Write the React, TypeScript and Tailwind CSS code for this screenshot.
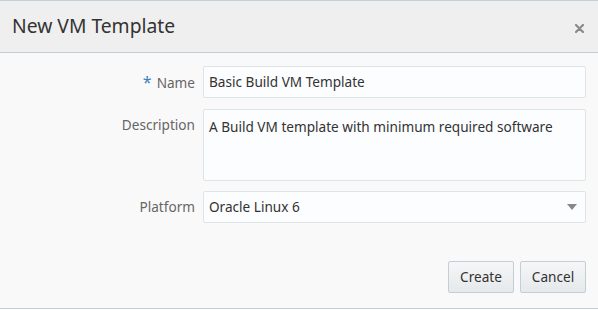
const font = { fontFamily: '"Noto Sans", "Open Sans", sans-serif' };

function Field({ label, required, children }: { label: string; required?: boolean; children: React.ReactNode }) {
  return (
    <div className="flex items-start">
      <div className="w-[195px] shrink-0 text-right text-[13.6px] leading-[32px] text-[#666]">
        {required && <span className="mr-[5px] text-[16px] text-[#3c7dc4]">*</span>}
        {label}
      </div>
      <div className="ml-[8px] w-[383px]">{children}</div>
    </div>
  );
}

export default function App() {
  return (
    <div className="flex h-[310px] w-[598px] flex-col bg-white" style={font}>
      <div className="flex h-[53px] shrink-0 items-center justify-between border-t border-b border-[#c4ced7] bg-[#efefef] pl-[12px] pr-[14px]">
        <h1 className="text-[19.3px] font-normal text-[#333]">New VM Template</h1>
        <svg width="9" height="9" viewBox="0 0 9 9" className="mt-[4px]">
          <path d="M1 1L8 8M8 1L1 8" stroke="#8a8a8a" strokeWidth="2.2" strokeLinecap="round" />
        </svg>
      </div>
      <div className="flex h-[256px] shrink-0 flex-col border-b border-[#c4ced7] bg-[#f9f9f9] pt-[13px]">
        <div className="flex flex-col gap-[10px]">
          <Field label="Name" required>
            <div className="flex h-[32px] items-center rounded-[2px] border border-[#dfe4e7] bg-[#fcfdfe] px-[5px] text-[13.6px] text-[#333]">
              Basic Build VM Template
            </div>
          </Field>
          <Field label="Description">
            <div className="h-[72px] rounded-[2px] border border-[#dfe4e7] bg-[#fcfdfe] px-[5px] pt-[7px] text-[13.6px] text-[#333]">
              A Build VM template with minimum required software
            </div>
          </Field>
          <Field label="Platform">
            <div className="flex h-[32px] items-center justify-between rounded-[2px] border border-[#dfe4e7] bg-[#fcfdfe] pl-[5px] pr-[8px] text-[13.6px] text-[#333]">
              <span>Oracle Linux 6</span>
              <svg width="10" height="6" viewBox="0 0 10 6">
                <path d="M0 0H10L5 6Z" fill="#888" />
              </svg>
            </div>
          </Field>
        </div>
        <div className="mt-[38px] flex justify-end gap-[6px] pr-[12px]">
          <button className="h-[32px] w-[66px] rounded-[2px] border border-[#c4ced7] bg-gradient-to-b from-[#f5f6f7] to-[#e6e9eb] text-[13.6px] text-[#333]">
            Create
          </button>
          <button className="h-[32px] w-[66px] rounded-[2px] border border-[#c4ced7] bg-gradient-to-b from-[#f5f6f7] to-[#e6e9eb] text-[13.6px] text-[#333]">
            Cancel
          </button>
        </div>
      </div>
    </div>
  );
}
